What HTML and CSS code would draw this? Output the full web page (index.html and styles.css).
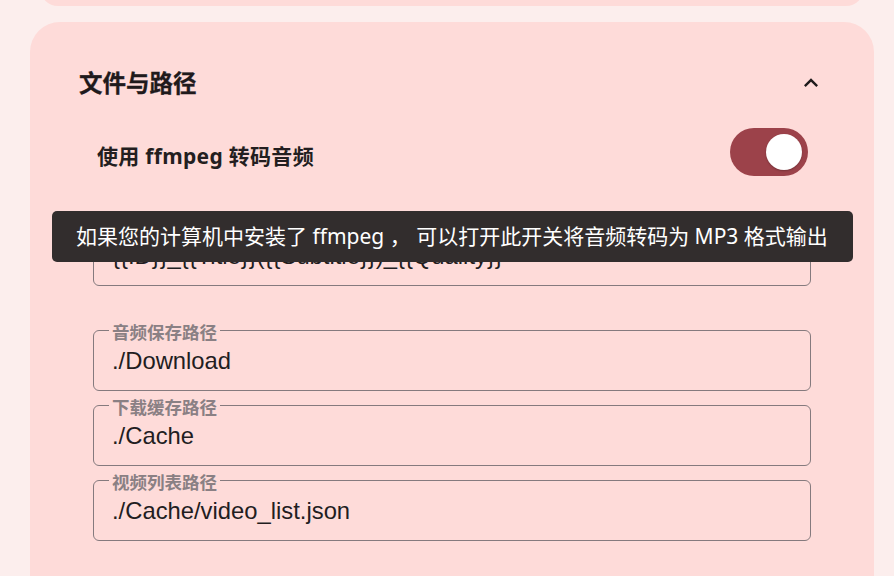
FILE: index.html
```html
<!DOCTYPE html>
<html lang="zh-CN">
<head>
<meta charset="utf-8">
<title>设置</title>
<link rel="stylesheet" href="styles.css">
</head>
<body>
<div class="page">
  <div class="card-prev"></div>
  <section class="panel">
    <div class="panel-head">
      <h2 class="panel-title">文件与路径</h2>
      <svg class="chevron" viewBox="0 0 24 24" width="28" height="28"><path d="M12 8l-6 6 1.41 1.41L12 10.83l4.59 4.58L18 14z" fill="#1f1b1c"/></svg>
    </div>
    <div class="toggle-row">
      <span class="toggle-label">使用 ffmpeg 转码音频</span>
      <span class="switch"><span class="thumb"></span></span>
    </div>
    <div class="fields">
      <div class="field first">
        <span class="field-label">文件名格式</span>
        <div class="field-value">{{ID}}_{{Title}}({{Subtitle}})_{{Quality}}</div>
      </div>
      <div class="field gap-big">
        <span class="field-label">音频保存路径</span>
        <div class="field-value">./Download</div>
      </div>
      <div class="field">
        <span class="field-label">下载缓存路径</span>
        <div class="field-value">./Cache</div>
      </div>
      <div class="field">
        <span class="field-label">视频列表路径</span>
        <div class="field-value">./Cache/video_list.json</div>
      </div>
    </div>
    <div class="tooltip">如果您的计算机中安装了 ffmpeg ， 可以打开此开关将音频转码为 MP3 格式输出</div>
  </section>
</div>
</body>
</html>
```
FILE: styles.css
```css
html, body {
  margin: 0;
  padding: 0;
  background: #fceeed;
  height: 100%;
  overflow: hidden;
}
body {
  font-family: "Noto Sans", "Noto Sans CJK SC", sans-serif;
  color: #1f1b1c;
}
.page {
  padding: 0 20px 0 30px;
}
.card-prev {
  height: 40px;
  margin: -34px 10px 0 10px;
  background: #fedbd9;
  border-radius: 0 0 18px 18px;
}
.panel {
  position: relative;
  margin-top: 16px;
  background: #fedbd9;
  border-radius: 30px 30px 0 0;
  padding: 45px 49px 60px 49px;
  min-height: 600px;
}
.panel-head {
  display: flex;
  align-items: center;
  justify-content: space-between;
  height: 30px;
}
.panel-title {
  margin: 0;
  font-family: "Noto Sans CJK SC", sans-serif;
  font-size: 23.5px;
  font-weight: 700;
  line-height: 30px;
  color: #1f1a1c;
  -webkit-text-stroke: 0.3px #1f1a1c;
}
.chevron {
  display: block;
  position: relative;
  top: 1px;
}
.toggle-row {
  display: flex;
  align-items: center;
  justify-content: space-between;
  margin-top: 31px;
  padding: 0 17px 0 18px;
  height: 48px;
}
.toggle-label {
  font-family: "Noto Sans", "Noto Sans CJK SC", sans-serif;
  font-size: 21px;
  font-weight: 700;
  letter-spacing: 0.3px;
  color: #231e20;
  position: relative;
  top: 3px;
}
.switch {
  display: flex;
  align-items: center;
  justify-content: flex-end;
  width: 78px;
  height: 48px;
  box-sizing: border-box;
  padding: 0 6px;
  border-radius: 24px;
  background: #9c424a;
}
.thumb {
  width: 36px;
  height: 36px;
  border-radius: 50%;
  background: #ffffff;
  box-shadow: 0 1px 2px rgba(0,0,0,0.25);
}
.fields {
  margin: 49px 14px 0 14px;
}
.field {
  box-sizing: border-box;
  height: 61px;
  border: 1px solid #857a7e;
  border-radius: 6px;
  padding: 0 18px;
  margin-top: 14px;
}
.field.first {
  margin-top: 0;
}
.field.gap-big {
  margin-top: 44px;
}
.field-label {
  display: block;
  width: max-content;
  margin: -9px 0 0 -3px;
  padding: 0 3px;
  background: #fedbd9;
  font-family: "Noto Sans CJK SC", sans-serif;
  font-size: 17.5px;
  font-weight: 700;
  line-height: 20px;
  color: #8a8084;
}
.field-value {
  margin-top: 5px;
  font-family: "Liberation Sans", Arial, sans-serif;
  font-size: 23.8px;
  line-height: 28px;
  color: #221d1f;
  white-space: nowrap;
}
.tooltip {
  position: absolute;
  left: 22px;
  top: 189px;
  width: 801px;
  box-sizing: border-box;
  height: 51px;
  padding: 0 24px;
  background: #322d2d;
  border-radius: 5px;
  color: #ffffff;
  font-family: "Noto Sans", "Noto Sans CJK SC", sans-serif;
  font-size: 21px;
  line-height: 51px;
  white-space: nowrap;
}
```
